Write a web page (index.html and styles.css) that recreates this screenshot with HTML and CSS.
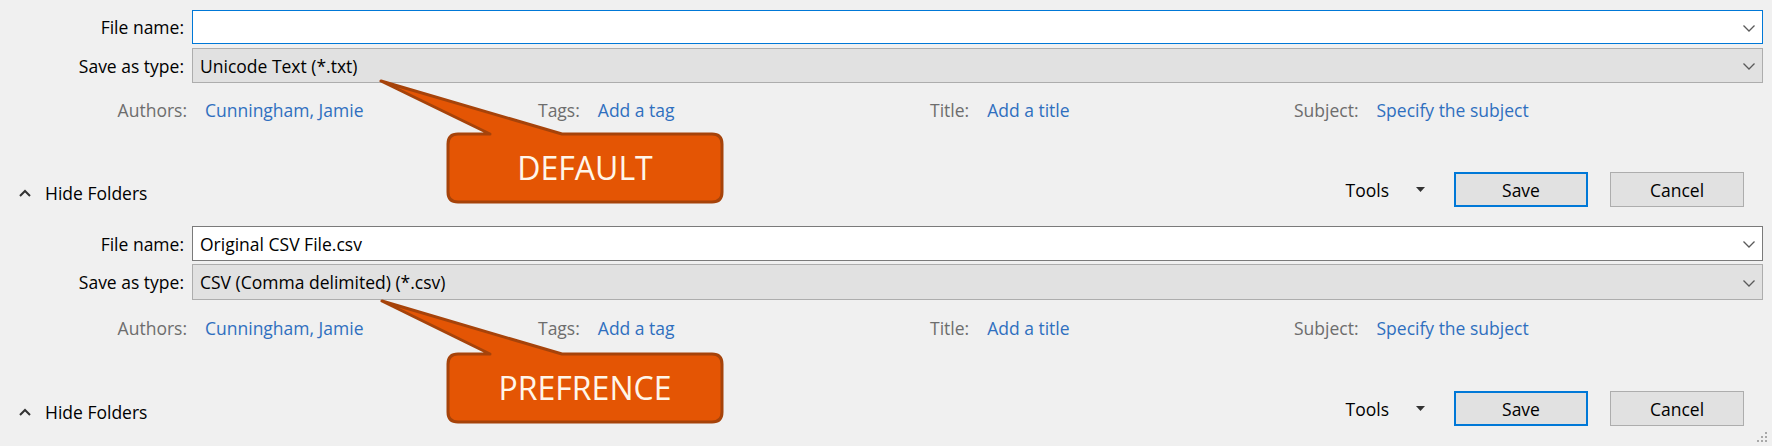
FILE: index.html
```html
<!DOCTYPE html>
<html lang="en">
<head>
<meta charset="utf-8">
<title>Save As</title>
<link rel="stylesheet" href="styles.css">
</head>
<body>
<div class="dialog">
  <section class="panel panel-first">
    <div class="fields">
      <label class="field-label">File name:</label>
      <div class="combo combo-focus">
        <span class="combo-text"></span>
        <svg class="chev" viewBox="0 0 12 7"><path d="M0.5 0.5 L6 6 L11.5 0.5" fill="none" stroke="#5a5a5a" stroke-width="1.3"/></svg>
      </div>
      <label class="field-label">Save as type:</label>
      <div class="combo combo-type">
        <span class="combo-text">Unicode Text (*.txt)</span>
        <svg class="chev" viewBox="0 0 12 7"><path d="M0.5 0.5 L6 6 L11.5 0.5" fill="none" stroke="#5a5a5a" stroke-width="1.3"/></svg>
      </div>
    </div>
    <div class="meta">
      <div class="prop prop-authors"><span class="prop-label">Authors:</span><span class="prop-value">Cunningham, Jamie</span></div>
      <div class="prop prop-tags"><span class="prop-label">Tags:</span><span class="prop-value">Add a tag</span></div>
      <div class="prop prop-title"><span class="prop-label">Title:</span><span class="prop-value">Add a title</span></div>
      <div class="prop prop-subject"><span class="prop-label">Subject:</span><span class="prop-value">Specify the subject</span></div>
    </div>
    <div class="footer">
      <div class="hide-folders">
        <svg class="caret" viewBox="0 0 12 8"><path d="M1 7 L6 2 L11 7" fill="none" stroke="#333" stroke-width="2"/></svg>
        <span>Hide Folders</span>
      </div>
      <div class="actions">
        <div class="tools"><span>Tools</span><svg class="tri" viewBox="0 0 9 5"><path d="M0 0 H9 L4.5 5 Z" fill="#333"/></svg></div>
        <button class="btn btn-default">Save</button>
        <button class="btn">Cancel</button>
      </div>
    </div>
    <svg class="callout" viewBox="376 76 352 132">
      <path d="M458 134 L490 134 L381 81 L562 134 L712 134 Q722 134 722 144 L722 192 Q722 202 712 202 L458 202 Q448 202 448 192 L448 144 Q448 134 458 134 Z" fill="#e45504" stroke="#a6430a" stroke-width="3" stroke-linejoin="round"/>
      <text class="callout-text" x="585" y="180" text-anchor="middle">DEFAULT</text>
    </svg>
  </section>

  <section class="panel panel-second">
    <div class="fields">
      <label class="field-label">File name:</label>
      <div class="combo">
        <span class="combo-text">Original CSV File.csv</span>
        <svg class="chev" viewBox="0 0 12 7"><path d="M0.5 0.5 L6 6 L11.5 0.5" fill="none" stroke="#5a5a5a" stroke-width="1.3"/></svg>
      </div>
      <label class="field-label">Save as type:</label>
      <div class="combo combo-type">
        <span class="combo-text">CSV (Comma delimited) (*.csv)</span>
        <svg class="chev" viewBox="0 0 12 7"><path d="M0.5 0.5 L6 6 L11.5 0.5" fill="none" stroke="#5a5a5a" stroke-width="1.3"/></svg>
      </div>
    </div>
    <div class="meta">
      <div class="prop prop-authors"><span class="prop-label">Authors:</span><span class="prop-value">Cunningham, Jamie</span></div>
      <div class="prop prop-tags"><span class="prop-label">Tags:</span><span class="prop-value">Add a tag</span></div>
      <div class="prop prop-title"><span class="prop-label">Title:</span><span class="prop-value">Add a title</span></div>
      <div class="prop prop-subject"><span class="prop-label">Subject:</span><span class="prop-value">Specify the subject</span></div>
    </div>
    <div class="footer">
      <div class="hide-folders">
        <svg class="caret" viewBox="0 0 12 8"><path d="M1 7 L6 2 L11 7" fill="none" stroke="#333" stroke-width="2"/></svg>
        <span>Hide Folders</span>
      </div>
      <div class="actions">
        <div class="tools"><span>Tools</span><svg class="tri" viewBox="0 0 9 5"><path d="M0 0 H9 L4.5 5 Z" fill="#333"/></svg></div>
        <button class="btn btn-default">Save</button>
        <button class="btn">Cancel</button>
      </div>
    </div>
    <svg class="callout callout-second" viewBox="376 76 352 132">
      <path d="M458 134 L490 134 L382 81 L562 134 L712 134 Q722 134 722 144 L722 192 Q722 202 712 202 L458 202 Q448 202 448 192 L448 144 Q448 134 458 134 Z" fill="#e45504" stroke="#a6430a" stroke-width="3" stroke-linejoin="round"/>
      <text class="callout-text" x="585" y="180" text-anchor="middle">PREFRENCE</text>
    </svg>
    <svg class="grip" viewBox="0 0 12 12">
      <rect x="9" y="1" width="2" height="2" fill="#a8a8a8"/>
      <rect x="5" y="5" width="2" height="2" fill="#a8a8a8"/>
      <rect x="9" y="5" width="2" height="2" fill="#a8a8a8"/>
      <rect x="1" y="9" width="2" height="2" fill="#a8a8a8"/>
      <rect x="5" y="9" width="2" height="2" fill="#a8a8a8"/>
      <rect x="9" y="9" width="2" height="2" fill="#a8a8a8"/>
    </svg>
  </section>
</div>
</body>
</html>
```

FILE: styles.css
```css
html, body {
  margin: 0;
  padding: 0;
}

body {
  background: #f0f0f0;
  font-family: "Open Sans", "Noto Sans", sans-serif;
  font-size: 17.5px;
  color: #000;
  width: 1772px;
  height: 446px;
  overflow: hidden;
}

.dialog {
  width: 1772px;
}

.panel {
  position: relative;
  height: 216px;
  box-sizing: border-box;
  padding: 10px 9px 0 0;
}

.panel-second {
  height: 230px;
}

.fields {
  display: grid;
  grid-template-columns: 184px 1fr;
  column-gap: 8px;
  row-gap: 4px;
  align-items: center;
}

.panel-second .fields {
  row-gap: 3px;
}

.field-label {
  text-align: right;
  line-height: 22px;
}

.combo {
  height: 34px;
  box-sizing: border-box;
  border: 1px solid #7a7a7a;
  background: #fff;
  display: flex;
  align-items: center;
  padding: 0 7px 0 7px;
  line-height: 22px;
}

.combo-focus {
  border-color: #0078d7;
}

.combo-type {
  background: #e1e1e1;
  border-color: #adadad;
  height: 35px;
}

.panel-second .combo {
  height: 35px;
}

.panel-second .combo-type {
  height: 36px;
}

.combo-text {
  flex: 1;
}

.chev {
  width: 12px;
  height: 7px;
  margin-top: 2px;
}

.meta {
  display: flex;
  margin-top: 16px;
  height: 22px;
  line-height: 22px;
  white-space: nowrap;
}

.panel-second .meta {
  margin-top: 17px;
}

.prop {
  display: flex;
  gap: 18px;
}

.prop-authors {
  width: 538px;
}

.prop-authors .prop-label {
  width: 187px;
  text-align: right;
}

.prop-tags {
  width: 392px;
}

.prop-title {
  width: 364px;
}

.prop-label {
  color: #6d6d6d;
}

.prop-value {
  color: #2f6fbf;
}

.footer {
  display: flex;
  justify-content: space-between;
  align-items: center;
  margin-top: 51px;
  padding-right: 19px;
  line-height: 22px;
}

.panel-second .footer {
  margin-top: 52px;
}

.hide-folders {
  display: flex;
  align-items: center;
  gap: 14px;
  padding-left: 19px;
  padding-top: 6px;
}

.caret {
  width: 12px;
  height: 8px;
}

.actions {
  display: flex;
  align-items: center;
}

.tools {
  display: flex;
  align-items: center;
  gap: 27px;
  margin-right: 29px;
}

.tri {
  width: 9px;
  height: 5px;
}

.btn {
  width: 134px;
  height: 35px;
  box-sizing: border-box;
  border: 1px solid #adadad;
  background: #e1e1e1;
  font: inherit;
  color: #000;
  padding: 0;
}

.btn-default {
  border: 2px solid #0078d7;
}

.btn + .btn {
  margin-left: 22px;
}

.callout {
  position: absolute;
  left: 376px;
  top: 76px;
  width: 352px;
  height: 132px;
  overflow: visible;
}

.callout-second {
  top: 80px;
}

.callout-text {
  font-family: "Open Sans", "Noto Sans", sans-serif;
  font-size: 32px;
  fill: #fff6ea;
}

.grip {
  position: absolute;
  right: 4px;
  bottom: 3px;
  width: 12px;
  height: 12px;
}
```
